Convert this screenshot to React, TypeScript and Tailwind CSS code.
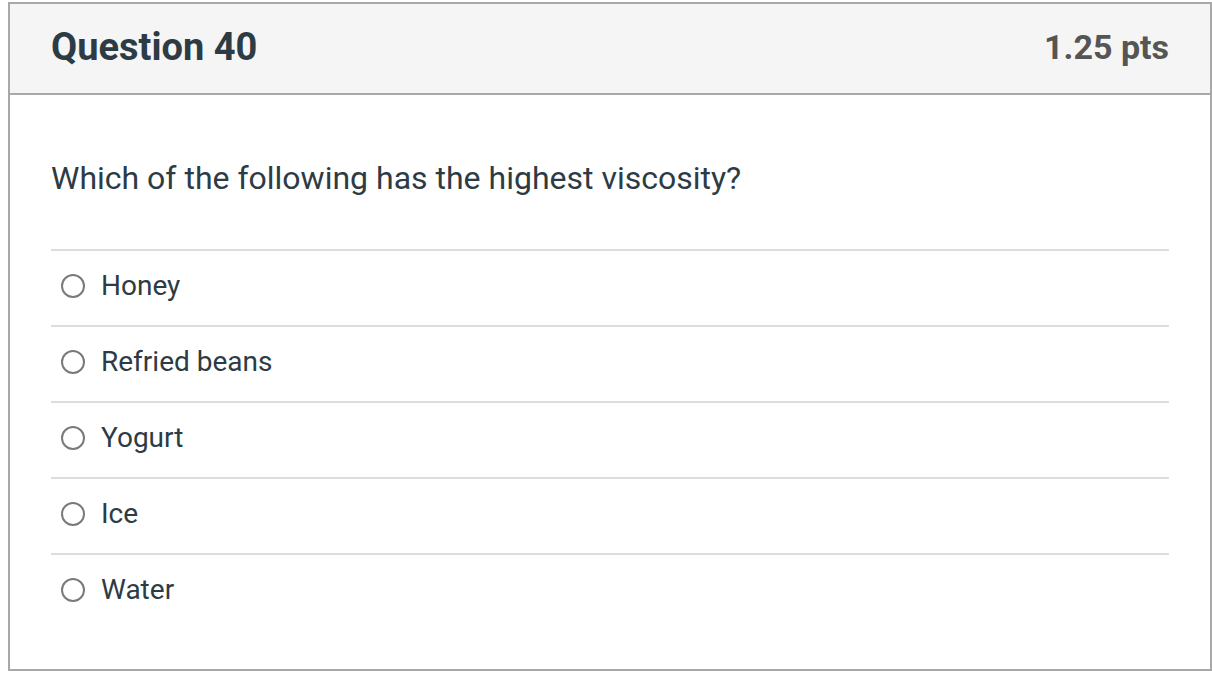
const options = ["Honey", "Refried beans", "Yogurt", "Ice", "Water"];

function App() {
	return (
		<div className="bg-white w-[1212px] h-[678px] pt-[2px] pl-[8px]" style={{ fontFamily: "Roboto, 'Liberation Sans', sans-serif" }}>
			<div className="w-[1204px] h-[669px] border-2 border-[#a8a8a8] flex flex-col">
				<div className="h-[91px] bg-[#f5f5f5] border-b-2 border-[#a8a8a8] flex items-center justify-between px-[41px] pb-[2px]">
					<div className="text-[38px] font-bold text-[#2d3b45]">Question 40</div>
					<div className="text-[34px] font-bold text-[#555555]">1.25 pts</div>
				</div>
				<div className="px-[41px]">
					<div className="pt-[63px] pb-[51px] text-[32px] leading-[40px] text-[#2d3b45]">
						Which of the following has the highest viscosity?
					</div>
					{options.map((opt) => (
						<div key={opt} className="h-[76px] border-t-2 border-[#dddddd] flex items-center pb-[4px]">
							<div className="ml-[10px] w-[24px] h-[24px] rounded-full border-2 border-[#7a7a7a]"></div>
							<span className="ml-[16px] text-[28px] text-[#2d3b45]">{opt}</span>
						</div>
					))}
				</div>
			</div>
		</div>
	);
}

export default App;
